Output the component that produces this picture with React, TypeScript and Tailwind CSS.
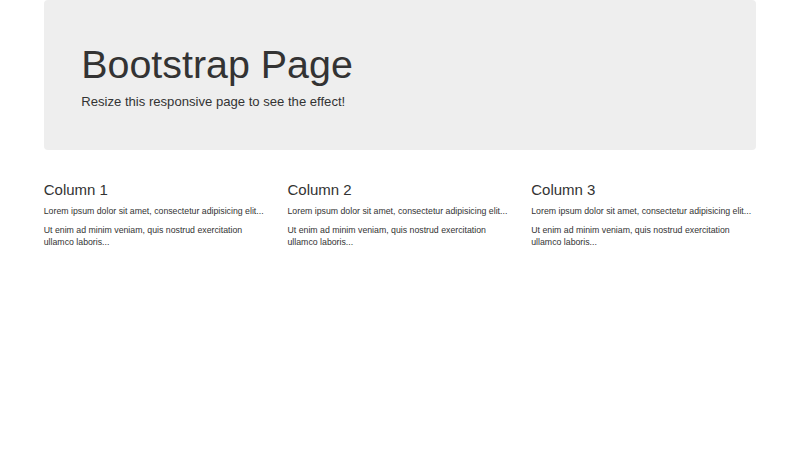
const columns = [
  { title: "Column 1" },
  { title: "Column 2" },
  { title: "Column 3" },
];

const App = () => {
  return (
    <div className="min-h-screen bg-white font-['Liberation_Sans',Arial,sans-serif] text-[#333]">
      <div className="mx-auto w-[712.5px]">
        <header className="mb-[19.5px] rounded-[4px] bg-[#eee] px-[37.5px] pt-[30px] pb-[29px]">
          <h1 className="mt-[12.5px] mb-[7.25px] text-[39.4px] leading-[1.1]">Bootstrap Page</h1>
          <p className="mb-[9.4px] text-[13.1px] leading-[18.75px]">
            Resize this responsive page to see the effect!
          </p>
        </header>

        <div className="grid grid-cols-3 gap-x-[18.75px]">
          {columns.map((col) => (
            <section key={col.title}>
              <h3 className="mt-[12.5px] mb-[6.5px] text-[15px] leading-[1.1]">{col.title}</h3>
              <p className="mb-[6.25px] text-[8.75px] leading-[12.5px]">
                Lorem ipsum dolor sit amet, consectetur adipisicing elit...
              </p>
              <p className="mb-[6.25px] text-[8.75px] leading-[12.5px]">
                Ut enim ad minim veniam, quis nostrud exercitation ullamco laboris...
              </p>
            </section>
          ))}
        </div>
      </div>
    </div>
  );
};

export default App;
